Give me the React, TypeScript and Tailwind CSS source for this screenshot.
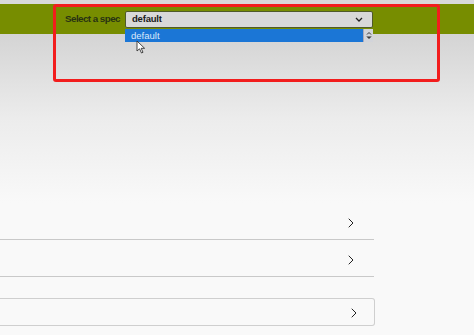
import { ChevronRight } from "lucide-react";

const font = { fontFamily: '"Liberation Sans", "Open Sans", sans-serif' };

function Cursor() {
  return (
    <svg width="11" height="14" viewBox="0 0 11 14" className="absolute left-[136px] top-[40px]">
      <path d="M1 1 L1 11 L3.5 8.8 L5.5 13 L7 12.3 L5.2 8.3 L8.6 8.3 Z" fill="#ffffff" stroke="#333" strokeWidth="0.9" strokeLinejoin="round" />
    </svg>
  );
}

function Row({ boxed }: { boxed?: boolean }) {
  return (
    <div
      className={
        boxed
          ? "flex h-[28px] w-[375px] items-center justify-end rounded-r-[3px] border border-l-0 border-[#cfcfcf] pr-[12px] pt-[1px]"
          : "flex h-[37px] w-[374px] items-center justify-end border-b border-[#c9c9c9] pr-[15px] pt-[4px]"
      }
    >
      <ChevronRight className="h-[16px] w-[16px] text-[#222]" strokeWidth={1.5} />
    </div>
  );
}

export default function App() {
  return (
    <div className="relative h-[335px] w-[474px] overflow-hidden bg-[#f9f9f9]" style={font}>
      <div className="h-[4px] bg-[#d9d9d9]" />
      <div className="flex h-[30px] items-start bg-[#778d00] pl-[65px] pt-[7px]">
        <span className="mt-[1px] w-[60px] shrink-0 whitespace-nowrap text-[9.8px] font-bold leading-[14px] tracking-[-0.55px] text-[#283313]">Select a spec</span>
        <div className="flex h-[17px] w-[248px] shrink-0 items-center justify-between rounded-[2px] border border-[#4f5a2a] bg-[#d8d8d8] pl-[6px] pr-[9px]">
          <span className="text-[9.5px] font-bold tracking-[-0.2px] text-[#1a1a1a]">default</span>
          <svg width="8" height="5" viewBox="0 0 8 5">
            <path d="M1 1 L4 4 L7 1" fill="none" stroke="#222" strokeWidth="1.3" />
          </svg>
        </div>
      </div>
      <div className="h-[169px] bg-gradient-to-b from-[#d4d4d4] via-[#ececec] to-[#f9f9f9]" />
      <div className="flex flex-col">
        <Row />
        <Row />
        <div className="h-[21px]" />
        <Row boxed />
      </div>

      <div className="absolute left-[125px] top-[29px] flex h-[13px] w-[248px] items-center bg-[#1b76d6]">
        <span className="flex-1 pl-[6px] text-[9.5px] leading-none text-[#dce9fb]">default</span>
        <div className="flex h-full w-[10px] flex-col items-center justify-center border-l border-[#aab] bg-[#d2d4da]">
          <svg width="6" height="9" viewBox="0 0 6 9">
            <path d="M1 3.5 L3 1.5 L5 3.5" fill="none" stroke="#333" strokeWidth="1" />
            <path d="M1 5.5 L3 7.5 L5 5.5" fill="#333" stroke="#333" strokeWidth="1" />
          </svg>
        </div>
      </div>
      <Cursor />
      <div className="pointer-events-none absolute left-[53px] top-[4px] h-[78px] w-[387px] rounded-[3px] border-[3px] border-[#f21d1d]" />
    </div>
  );
}
